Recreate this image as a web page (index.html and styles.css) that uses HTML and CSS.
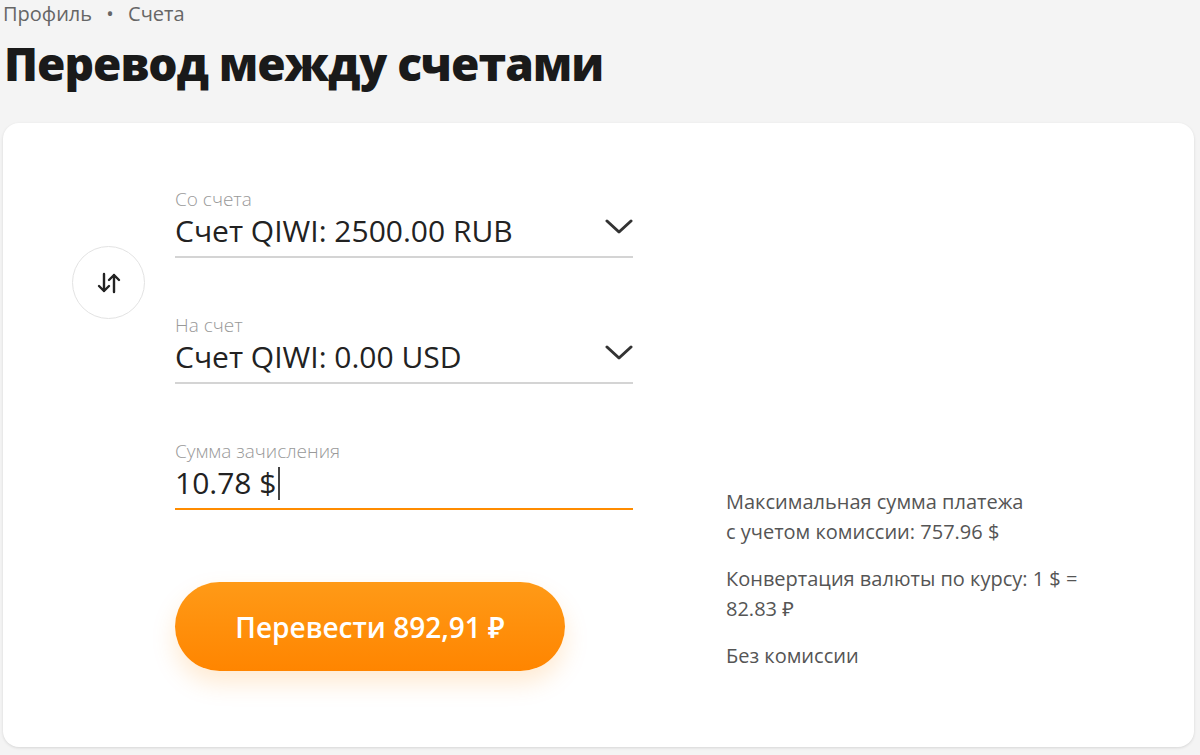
FILE: index.html
```html
<!DOCTYPE html>
<html lang="ru">
<head>
  <meta charset="UTF-8" />
  <meta name="viewport" content="width=device-width, initial-scale=1" />
  <title>Перевод между счетами</title>
  <link rel="stylesheet" href="styles.css">
</head>
<body>

<nav class="breadcrumbs">
  <a href="#">Профиль</a>
  <span class="sep">•</span>
  <a href="#">Счета</a>
</nav>

<h1 class="page-title">Перевод между счетами</h1>

<div class="card">
  <div class="swap-col">
    <button class="swap-btn" title="Поменять местами">
      <svg width="26" height="22" viewBox="0 0 26 22" fill="none" stroke="#222" stroke-width="2.4" stroke-linecap="round" stroke-linejoin="round">
        <path d="M8 2v17M3 14l5 5 5-5" />
        <path d="M18 20V3M13 8l5-5 5 5" />
      </svg>
    </button>
  </div>

  <div class="form-col">
    <div class="field select">
      <div class="field-label">Со счета</div>
      <div class="field-value">Счет QIWI: 2500.00 RUB</div>
      <svg class="chevron" width="28" height="16" viewBox="0 0 28 16" fill="none" stroke="#333" stroke-width="3" stroke-linecap="round" stroke-linejoin="round">
        <path d="M2 2l12 11L26 2" />
      </svg>
    </div>

    <div class="field select">
      <div class="field-label">На счет</div>
      <div class="field-value">Счет QIWI: 0.00 USD</div>
      <svg class="chevron" width="28" height="16" viewBox="0 0 28 16" fill="none" stroke="#333" stroke-width="3" stroke-linecap="round" stroke-linejoin="round">
        <path d="M2 2l12 11L26 2" />
      </svg>
    </div>

    <div class="field active">
      <div class="field-label">Сумма зачисления</div>
      <div class="field-value">10.78 $<span class="caret"></span></div>
    </div>

    <button class="submit-btn">Перевести 892,91 ₽</button>
  </div>

  <div class="info-col">
    <p>Максимальная сумма платежа<br>с учетом комиссии: 757.96 $</p>
    <p>Конвертация валюты по курсу: 1 $ =<br>82.83 ₽</p>
    <p>Без комиссии</p>
  </div>
</div>

</body>
</html>
```

FILE: styles.css
```css
body {
  font-family: 'Open Sans', 'Noto Sans', sans-serif;
  background-color: #f4f4f4;
  color: #222;
  margin: 0;
  padding: 0;
}
.breadcrumbs {
  padding: 1px 3px 0;
  font-size: 20px;
  line-height: 26px;
  color: #666;
}
.breadcrumbs a {
  color: #666;
  text-decoration: none;
}
.breadcrumbs .sep {
  margin: 0 9px;
  font-size: 20px;
}
.page-title {
  margin: 6px 0 0 4px;
  font-size: 46px;
  line-height: 60px;
  font-weight: 800;
  color: #1a1a1a;
  letter-spacing: -1px;
}
.card {
  background: white;
  margin: 30px 6px 8px 3px;
  border-radius: 16px;
  box-shadow: 0 1px 3px rgba(0,0,0,0.12);
  padding: 64px 0 76px 69px;
  display: grid;
  grid-template-columns: 73px 458px auto;
  column-gap: 30px;
}
.swap-col {
  padding-top: 59px;
}
.swap-btn {
  width: 73px;
  height: 73px;
  border-radius: 50%;
  border: 1px solid #e3e3e3;
  background: white;
  display: flex;
  align-items: center;
  justify-content: center;
  cursor: pointer;
  padding: 0;
}
.form-col {
  display: flex;
  flex-direction: column;
}
.field {
  position: relative;
  border-bottom: 2px solid #d4d4d4;
  padding-bottom: 6px;
  margin-bottom: 55px;
}
.field.active {
  border-bottom-color: #ff8c00;
  margin-bottom: 72px;
}
.field-label {
  font-size: 19px;
  line-height: 25px;
  color: #999;
  font-weight: 300;
}
.field-value {
  font-size: 30px;
  line-height: 38px;
  color: #222;
}
.caret {
  display: inline-block;
  width: 2px;
  height: 33px;
  background: #444;
  vertical-align: -6px;
  margin-left: 2px;
}
.chevron {
  position: absolute;
  right: 0;
  top: 32px;
}
.submit-btn {
  width: 390px;
  height: 89px;
  border: none;
  border-radius: 45px;
  background: linear-gradient(180deg, #ff9a17 0%, #ff8500 100%);
  box-shadow: 0 12px 24px rgba(255,140,0,0.18);
  color: white;
  font-family: inherit;
  font-size: 28px;
  font-weight: 600;
  cursor: pointer;
}
.info-col {
  align-self: end;
  margin-left: 63px;
  font-size: 20px;
  line-height: 30px;
  color: #555;
}
.info-col p {
  margin: 0 0 17px;
}
.info-col p:last-child {
  margin-bottom: 0;
}
```
